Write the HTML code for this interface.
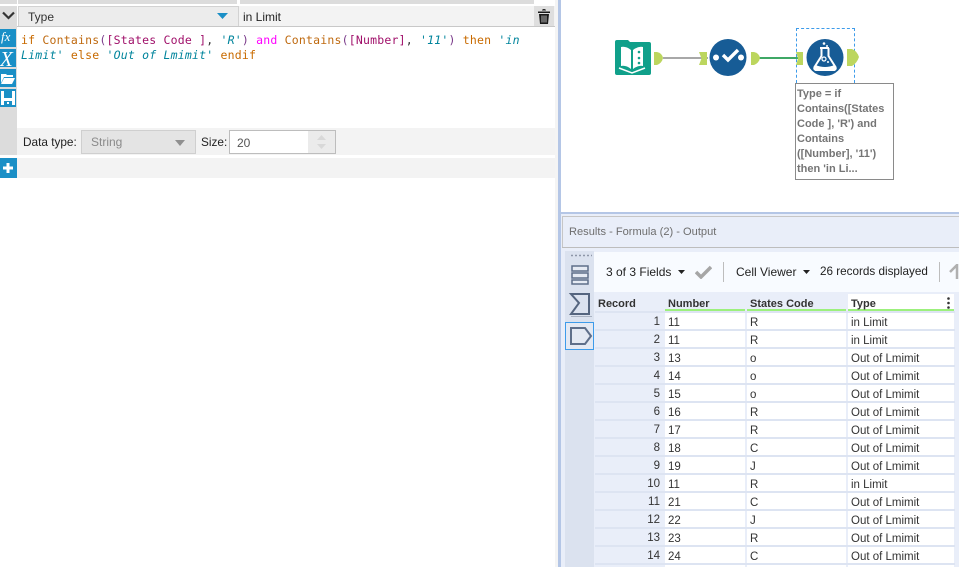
<!DOCTYPE html>
<html><head><meta charset="utf-8"><style>
html,body{margin:0;padding:0;background:#fff}
#p{position:relative;width:959px;height:567px;overflow:hidden;background:#fff;font-family:"Liberation Sans",sans-serif;font-size:11.5px;color:#222}
#p div,#p svg{position:absolute}
.t{white-space:nowrap}
.code{font-family:"DejaVu Sans Mono","Liberation Mono",monospace;font-size:11.5px;letter-spacing:.2px;line-height:15px;white-space:nowrap;color:#c55a00}
.st{color:#00849c;font-style:italic}.fd{color:#a0106a}.kw{color:#c86a00}.fn{color:#bf6a10}.an{color:#f0f}.p{color:#7a3a8a}
.c{background:#fff;height:16px;line-height:20px;color:#333}
.tip{color:#757575;font-weight:bold;font-size:11px;line-height:15px}
</style></head><body><div id="p">
<!-- top tabs -->
<div style="left:0;top:0;width:17px;height:4px;background:#dcdcdc"></div>
<div style="left:18px;top:0;width:219px;height:4px;background:#dcdcdc"></div>
<div style="left:240px;top:0;width:294px;height:4px;background:#dcdcdc"></div>
<div style="left:18px;top:6px;width:537px;height:20px;background:#f3f3f3"></div>
<div style="left:0;top:26px;width:555px;height:1px;background:#c8c8c8"></div>
<!-- left rail -->
<div style="left:0;top:6px;width:17px;height:149px;background:#dcdcdc"></div>
<svg style="left:2px;top:11px" width="13" height="9" viewBox="0 0 13 9"><path d="M1 1.500 L6.500 7 L12 1.500" fill="none" stroke="#333" stroke-width="2.200"/></svg>
<!-- type dropdown -->
<div style="left:18px;top:6px;width:219px;height:19px;background:#ececec;border:1px solid #d2d2d2;border-width:1px 1px 0 1px"></div>
<div class="t" style="left:28px;top:10px;color:#333;font-size:12px">Type</div>
<svg style="left:217px;top:13px" width="11" height="7"><path d="M0 0H11L5.500 6Z" fill="#1a8fc6"/></svg>
<div class="t" style="left:243px;top:10px;color:#222;font-size:12px">in Limit</div>
<div style="left:534px;top:6px;width:20px;height:20px;background:#dedede"></div>
<svg style="left:537px;top:8px" width="14" height="17" viewBox="0 0 14 17"><path d="M1 3.500H13V5H1ZM5 2.500C5 .5 9 .5 9 2.500ZM2 6H12L11 16H3Z" fill="#1a1a1a"/><path d="M5 7.500V14.500M7 7.500V14.500M9 7.500V14.500" stroke="#dedede" stroke-width=".8"/></svg>
<!-- side icons -->
<div style="left:0;top:29px;width:16px;height:18px;background:#1a8fc6"></div>
<div class="t" style="left:1px;top:29px;color:#fff;font:italic 13px 'Liberation Serif',serif">fx</div>
<div style="left:0;top:49px;width:16px;height:18px;background:#1a8fc6"></div>
<div class="t" style="left:0;top:47px;color:#fff;font:italic 21px 'Liberation Serif',serif">X</div>
<div style="left:0;top:69px;width:16px;height:18px;background:#1a8fc6"></div>
<svg style="left:0;top:72px" width="15" height="13" viewBox="0 0 15 13"><path d="M1 3V2H6L7 3H13V5H4L1 11Z M4 6H15L12 12H1Z" fill="#fff"/></svg>
<div style="left:0;top:89px;width:16px;height:18px;background:#1a8fc6"></div>
<svg style="left:1px;top:90px" width="14" height="16" viewBox="0 0 14 16"><path d="M0 1H14V15H0Z" fill="#fff"/><path d="M3 1H11V8H3Z" fill="#1a8fc6"/><path d="M3 11H11V15H3Z" fill="#1a8fc6"/><path d="M6 12H8V14H6Z" fill="#fff"/></svg>
<!-- code -->
<div class="code" style="left:21px;top:33px"><span class="kw">if</span> <span class="fn">Contains</span><span class="p">(</span><span class="fd">[States Code ]</span><span style="color:#333">,</span> <span class="st">'R'</span><span class="p">)</span> <span class="an">and</span> <span class="fn">Contains</span><span class="p">(</span><span class="fd">[Number]</span><span style="color:#333">,</span> <span class="st">'11'</span><span class="p">)</span> <span class="kw">then</span> <span class="st">'in</span><br><span class="st">Limit'</span> <span class="kw">else</span> <span class="st">'Out of Lmimit'</span> <span class="kw">endif</span></div>
<!-- data type row -->
<div style="left:17px;top:128px;width:538px;height:27px;background:#f3f3f3"></div>
<div class="t" style="left:23px;top:135px;font-size:11.800px">Data type:</div>
<div style="left:81px;top:130px;width:113px;height:22px;background:#e4e4e4;border:1px solid #cfcfcf"></div>
<div class="t" style="left:91px;top:135px;color:#8a8a8a;font-size:12px">String</div>
<svg style="left:175px;top:140px" width="10" height="6"><path d="M0 0H10L5 6Z" fill="#8f8f8f"/></svg>
<div class="t" style="left:201px;top:135px;font-size:11.800px">Size:</div>
<div style="left:229px;top:130px;width:105px;height:22px;background:#fff;border:1px solid #bdbdbd"></div>
<div class="t" style="left:237px;top:136px;color:#555;font-size:12px">20</div>
<div style="left:308px;top:131px;width:27px;height:22px;background:#ebebeb"></div>
<svg style="left:315px;top:134px" width="13" height="16"><path d="M2 6L6.500 1L11 6Z" fill="#d8d8d8"/><path d="M2 10L6.500 15L11 10Z" fill="#d8d8d8"/></svg>
<!-- plus row -->
<div style="left:17px;top:158px;width:538px;height:20px;background:#f3f3f3"></div>
<div style="left:0;top:158px;width:17px;height:20px;background:#1a8fc6"></div>
<svg style="left:3px;top:163px" width="10" height="10"><path d="M3.500 0H6.500V3.500H10V6.500H6.500V10H3.500V6.500H0V3.500H3.500Z" fill="#fff"/></svg>
<!-- splitter -->
<div style="left:555px;top:0;width:3px;height:567px;background:#f4f4f4"></div>
<div style="left:558px;top:0;width:3px;height:567px;background:#b4c6e6"></div>
<!-- workflow -->
<div style="left:796px;top:28px;width:59px;height:55px;border:1px dashed #3d9bea;box-sizing:border-box;border-bottom:0"></div>
<svg style="left:610px;top:35px" width="250" height="50" viewBox="610 35 250 50">
 <path d="M663 58H708" stroke="#a8a8a8" stroke-width="2"/>
 <path d="M757 58H800" stroke="#3fa866" stroke-width="2"/>
 <path d="M615 42q0-2 2-2h11l2 2h19q2 0 2 2v29q0 2-2 2h-32q-2 0-2-2Z" fill="#10a08a"/>
 <path d="M621 47q5-1 10 3v19q-5-4-10-3ZM633 50q5-4 10-3v19q-5-1-10 3Z" fill="#fff"/>
 <path d="M619 68l13 5 13-5" fill="none" stroke="#fff" stroke-width="1.500"/>
 <circle cx="639" cy="52" r="1.300" fill="#10a08a"/><circle cx="639" cy="58" r="1.300" fill="#10a08a"/><circle cx="639" cy="63" r="1.300" fill="#10a08a"/>
 <path d="M654 52h3q5 1 6 6q-1 5-6 7h-3Z" fill="#bcd65e"/>
 <path d="M699 52h8v13h-8l2.500-6.500Z" fill="#bcd65e"/>
 <circle cx="728" cy="57.500" r="18.500" fill="#175c96"/>
 <circle cx="716" cy="57.500" r="3" fill="#fff"/><circle cx="741" cy="57.500" r="3" fill="#fff"/>
 <path d="M723 55l5 5 10-10" fill="none" stroke="#fff" stroke-width="3.400"/>
 <path d="M751 52h3q5 1 6 6q-1 5-6 7h-3Z" fill="#bcd65e"/>
 <path d="M796 52h7v13h-7l2-6.500Z" fill="#bcd65e"/>
 <circle cx="825" cy="57.500" r="18.500" fill="#175c96"/>
 <path d="M820 48h9M821.500 48v8l-7 11q-1 3 2 3h17q3 0 2-3l-7-11v-8" fill="none" stroke="#fff" stroke-width="2"/>
 <path d="M815.500 65q9.500 4 19 0l1.500 3q0 3-2 3h-18q-2 0-2-3Z" fill="#fff"/>
 <circle cx="824" cy="59" r="2" fill="none" stroke="#fff" stroke-width="1.200"/><circle cx="828" cy="62" r="1" fill="#fff"/>
 <circle cx="824" cy="43.500" r="1.300" fill="#fff"/><circle cx="827" cy="46" r="1" fill="#fff"/>
 <path d="M847 49h5q5 2 7 8q-2 6-7 9h-5Z" fill="#bcd65e"/>
</svg>
<div style="left:795px;top:83px;width:97px;height:95px;background:#fff;border:1px solid #8a8a8a"></div>
<div class="t tip" style="left:797px;top:87px">Type = if<br>Contains([States<br>Code ], 'R') and<br>Contains<br>([Number], '11')<br>then 'in Li...</div>
<!-- results panel -->
<div style="left:561px;top:212px;width:398px;height:2px;background:#b4c6e6"></div>
<div style="left:561px;top:214px;width:398px;height:353px;background:#e9eef9"></div>
<div style="left:562px;top:216px;width:397px;height:1px;background:#c6c6c6"></div>
<div style="left:562px;top:216px;width:1px;height:31px;background:#c6c6c6"></div>
<div style="left:562px;top:247px;width:397px;height:1px;background:#bdbdbd"></div>
<div class="t" style="left:569px;top:226px;line-height:13px;margin-top:0;color:#6e6e6e;font-size:11.100px;padding-top:0">Results - Formula (2) - Output</div>
<div style="left:565px;top:251px;width:29px;height:316px;background:#dbe2ef"></div>
<svg style="left:565px;top:252px" width="30" height="100" viewBox="0 0 30 100">
 <path d="M6 3.500H27" stroke="#8d96a8" stroke-dasharray="2 2" stroke-width="1.500"/>
 <path d="M7 14H23V19H7ZM7 21H23V26H7ZM7 28H23V32H7Z" fill="#e6ebf4" stroke="#5f6f8a" stroke-width="1.500"/>
 <path d="M24 42H6L14 51L6 62H24Z" fill="none" stroke="#55657f" stroke-width="2"/>
 <path d="M6 64.500H27" stroke="#a9b2c2"/>
 <path d="M0.500 70.500H28.500V97.500H0.500Z" fill="#e4e9f3" stroke="#3d9bea"/>
 <path d="M6 76H20L26 84L20 92H6Z" fill="none" stroke="#5f6f8a" stroke-width="2"/>
</svg>
<div style="left:594px;top:252px;width:365px;height:40px;background:#f8fbff"></div>
<div class="t" style="left:606px;top:265px;font-size:12px">3 of 3 Fields</div>
<svg style="left:678px;top:270px" width="7" height="4"><path d="M0 0H7L3.500 4Z" fill="#222"/></svg>
<svg style="left:695px;top:265px" width="17" height="14"><path d="M1 7l5 5L16 2" fill="none" stroke="#a6a6a6" stroke-width="3.500"/></svg>
<div style="left:723px;top:262px;width:1px;height:20px;background:#bdbdbd"></div>
<div class="t" style="left:736px;top:265px;font-size:12px">Cell Viewer</div>
<svg style="left:803px;top:270px" width="7" height="4"><path d="M0 0H7L3.500 4Z" fill="#222"/></svg>
<div class="t" style="left:820px;top:265px;font-size:11.700px">26 records displayed</div>
<div style="left:939px;top:262px;width:1px;height:20px;background:#bdbdbd"></div>
<svg style="left:949px;top:264px" width="10" height="16"><path d="M1 8L8 1V15" fill="none" stroke="#b0b0b0" stroke-width="2.500"/></svg>
<!-- table header -->
<div style="left:595px;top:294px;width:68px;height:17px;background:#e9eef9"></div>
<div style="left:665px;top:294px;width:80px;height:15px;background:#e9eef9;border-bottom:2px solid #9cf07c"></div>
<div style="left:747px;top:294px;width:99px;height:15px;background:#e9eef9;border-bottom:2px solid #9cf07c"></div>
<div style="left:848px;top:294px;width:106px;height:15px;background:#fff;border-bottom:2px solid #9cf07c"></div>
<div class="t" style="left:598px;top:298px;font-weight:bold;font-size:11px;color:#333">Record</div>
<div class="t" style="left:668px;top:298px;font-weight:bold;font-size:11px;color:#333">Number</div>
<div class="t" style="left:750px;top:298px;font-weight:bold;font-size:11px;color:#333">States Code</div>
<div class="t" style="left:851px;top:298px;font-weight:bold;font-size:11px;color:#333">Type</div>
<svg style="left:946px;top:297px" width="5" height="12"><circle cx="2.500" cy="1.500" r="1.300" fill="#333"/><circle cx="2.500" cy="6" r="1.300" fill="#333"/><circle cx="2.500" cy="10.500" r="1.300" fill="#333"/></svg>
<!-- rows -->
<div id="r"></div>
<script>
var d=[[11,'R','in Limit'],[11,'R','in Limit'],[13,'o','Out of Lmimit'],[14,'o','Out of Lmimit'],[15,'o','Out of Lmimit'],[16,'R','Out of Lmimit'],[17,'R','Out of Lmimit'],[18,'C','Out of Lmimit'],[19,'J','Out of Lmimit'],[11,'R','in Limit'],[21,'C','Out of Lmimit'],[22,'J','Out of Lmimit'],[23,'R','Out of Lmimit'],[24,'C','Out of Lmimit'],['','','']];
var h='';
d.forEach(function(r,i){var y=313+i*18;
h+='<div style="left:595px;width:360px;top:'+(y-2)+'px;height:2px;background:#dde4f2"></div>';
h+='<div class="t" style="left:595px;width:65px;top:'+y+'px;height:16px;line-height:18px;text-align:right;color:#333">'+(r[0]===''?'':i+1)+'</div>';
h+='<div class="c t" style="left:665px;width:77px;padding-left:3px;top:'+y+'px">'+r[0]+'</div>';
h+='<div class="c t" style="left:747px;width:96px;padding-left:3px;top:'+y+'px">'+r[1]+'</div>';
h+='<div class="c t" style="left:848px;width:103px;padding-left:3px;top:'+y+'px">'+r[2]+'</div>';});
document.getElementById('r').innerHTML=h;
</script>
</div></body></html>
